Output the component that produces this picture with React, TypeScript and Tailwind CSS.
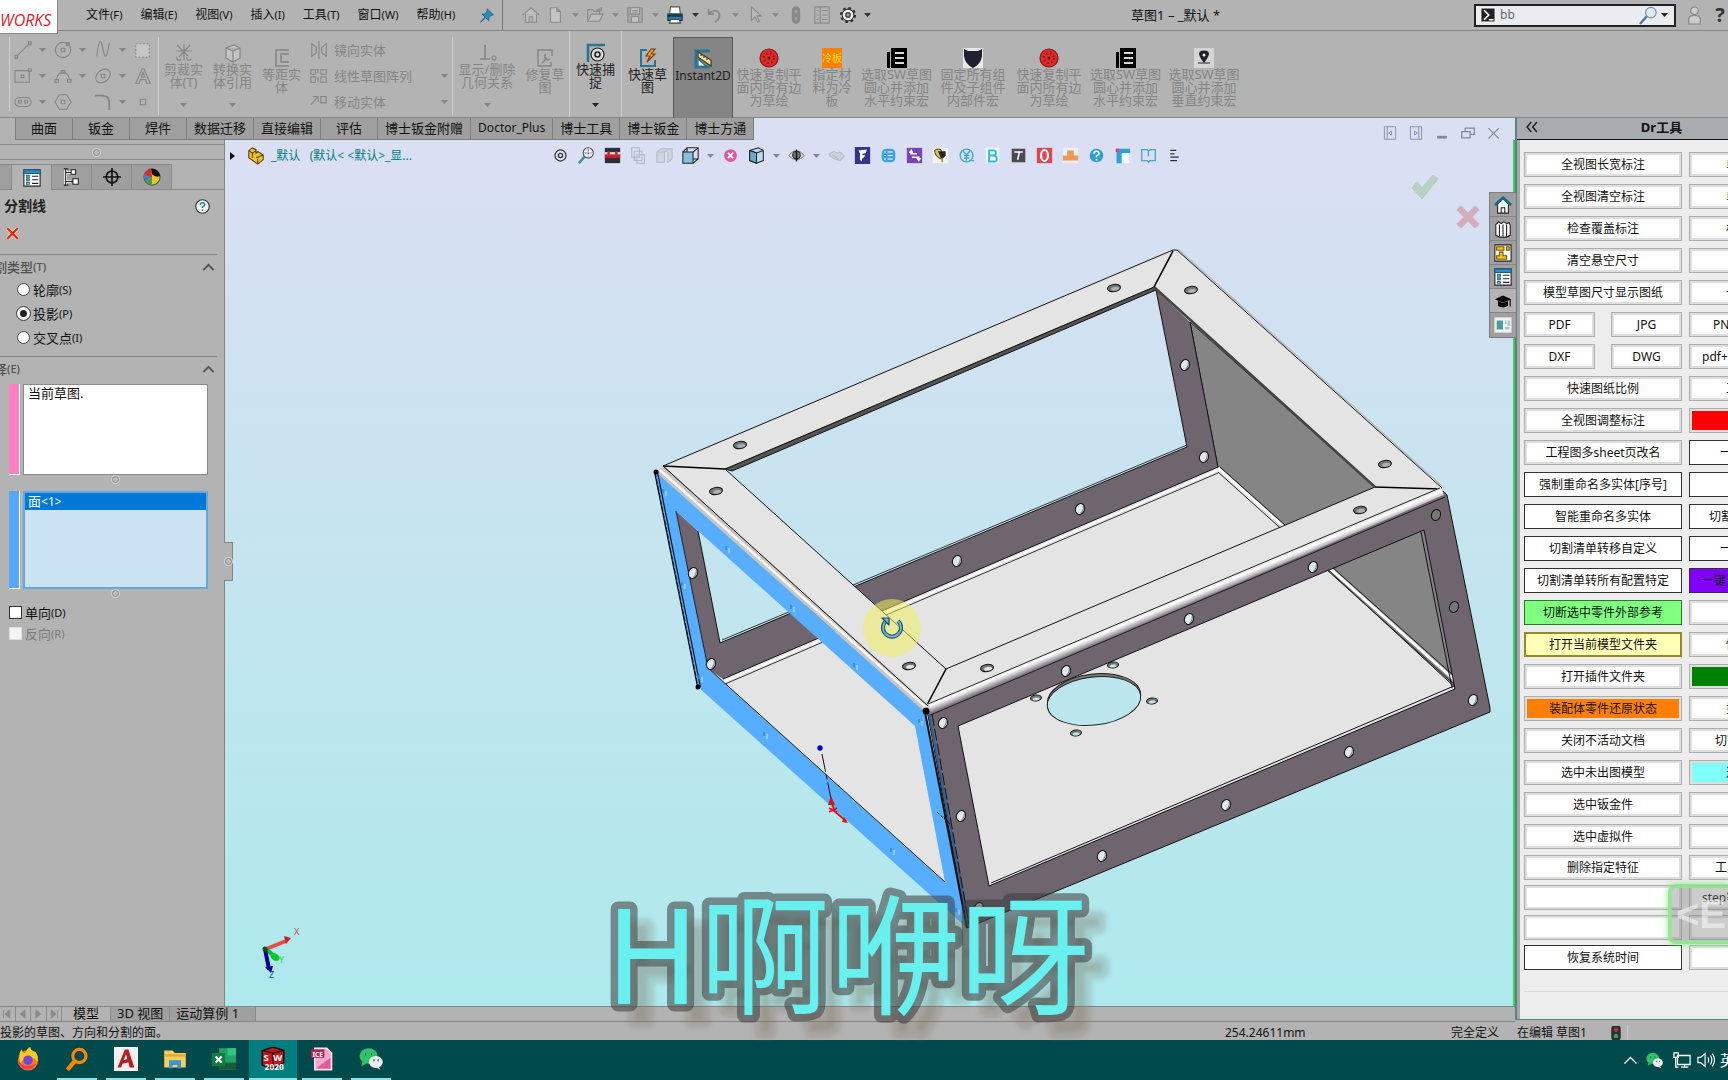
import type { ReactNode } from "react"
import clsx from "clsx"

type SvgProps = { size?: number; className?: string; children: ReactNode }

// every small drawing shares a 20 x 20 grid
function Svg({ size = 20, className, children }: SvgProps) {
  return (
    <svg width={size} height={size} viewBox="0 0 20 20" fill="none" stroke="currentColor" strokeWidth="1.2" className={clsx("shrink-0", className)} aria-hidden="true">
      {children}
    </svg>
  )
}

function Caret({ className = "w-4 text-[#808080]" }: { className?: string }) {
  return (
    <span className={clsx("flex shrink-0 justify-center", className)}>
      <svg width="7" height="4" viewBox="0 0 7 4" fill="currentColor" aria-hidden="true"><path d="M0 0h7L3.5 4z" /></svg>
    </span>
  )
}

/* ---------- title bar ---------- */

const menus = [
  ["文件", "(F)"], ["编辑", "(E)"], ["视图", "(V)"], ["插入", "(I)"], ["工具", "(T)"], ["窗口", "(W)"], ["帮助", "(H)"],
]

const quick = [
  { name: "新建", icon: <path d="M5 2h7l4 4v12H5zM12 2v4h4" fill="#c4c4c4" /> },
  { name: "打开", icon: <><path d="M2 17V4h5l2 2h6v3" /><path d="M2 17 6 9h13l-4 8z" fill="#bdbdbd" /><path d="M11 7c1-4 4-4 6-3M17 1v4h-4" /></> },
  { name: "保存", icon: <><path d="M2 2h16v16H2z" fill="#a8a8a8" /><path d="M5 2h10v7H5zM6 12h8v6H6zM7 5h6M7 7h6" fill="#c4c4c4" /></> },
  { name: "打印", on: true, icon: <><path d="M5 1h10l1 8H4z" fill="#fff" stroke="#555" /><path d="M2 9h16v7H2z" fill="#247fa5" stroke="#16384a" /><path d="M2 10h16v2H2z" fill="#16384a" stroke="none" /><path d="M5 15h10l1 4H4z" fill="#fff" stroke="#444" /></> },
  { name: "撤销", icon: <path d="M3 3v6h6M3 9c5-6 12-4 12 2 0 4-3 5-5 7" strokeWidth="2" /> },
  { name: "选择", icon: <path d="M6 1v15l4-4 3 6 2-1-3-6h5z" fill="#b8b8b8" /> },
]

function TitleBar() {
  return (
    <header className="flex h-[31px] shrink-0 items-center border-b border-[#858585] bg-[#b3b3b3]">
      <div className="relative z-10 -mb-1 h-[34px] w-[58px] shrink-0 self-start overflow-hidden border-r border-b border-[#8a8a8a] bg-white pt-2 font-['Open_Sans',sans-serif] text-[16px] leading-6 text-[#d8232a] italic">
        WORKS
      </div>
      <nav className="ml-5 flex gap-[2px]">
        {menus.map(([label, key]) => (
          <button key={label} className="flex items-baseline px-2 text-[12px] leading-5 whitespace-nowrap">
            {label}<span className="text-[11px]">{key}</span>
          </button>
        ))}
      </nav>
      <button aria-label="固定" className="ml-4">
        <Svg size={15}><path d="m11 1 8 8-3 1-3 3v4l-4-4-7 6 6-7-4-4h4l3-4z" fill="#2e8bb8" stroke="#1c6488" /></Svg>
      </button>
      <div className="ml-2 h-full w-px bg-[#777]" />
      <div className="ml-4 flex items-center text-[#8a8a8a]">
        <button aria-label="主页" className="flex w-6 justify-center">
          <Svg size={18}><path d="M1 10 10 2l9 8M4 9v9h12V9M8 18v-6h4v6" fill="#c0c0c0" /></Svg>
        </button>
        {quick.map((q) => (
          <span key={q.name} className="flex items-center">
            <button aria-label={q.name} className="flex w-6 justify-center"><Svg size={18}>{q.icon}</Svg></button>
            <Caret className={q.on ? "w-4 text-[#333]" : "w-4 text-[#8a8a8a]"} />
          </span>
        ))}
        <button aria-label="重建" className="flex w-[26px] justify-center">
          <Svg size={18}><rect x="6" y="1" width="8" height="18" rx="4" fill="#888" /><circle cx="10" cy="6" r="2" fill="#aaa" /><circle cx="10" cy="14" r="2" fill="#aaa" /></Svg>
        </button>
        <button aria-label="属性" className="flex w-[26px] justify-center">
          <Svg size={18}><path d="M2 1h16v18H2zM8 1v18M4 5h2M4 10h2M4 15h2M10 5h6M10 10h6M10 15h6" /></Svg>
        </button>
        <button aria-label="选项" className="flex w-[26px] justify-center">
          <Svg size={18}>
            <circle cx="10" cy="10" r="7.5" stroke="#333" strokeWidth="3" strokeDasharray="3 2.9" />
            <circle cx="10" cy="10" r="6.5" fill="#f4f4f4" stroke="#333" /><circle cx="10" cy="10" r="2.6" fill="#999" stroke="#333" />
          </Svg>
        </button>
        <Caret className="w-3 text-[#333]" />
      </div>
      <h1 className="mx-auto pl-1 text-[13px] leading-5 whitespace-nowrap">草图1 – _默认 *</h1>
      <label className="flex h-[23px] w-[202px] shrink-0 items-center border-2 border-[#222] bg-[#ebecef] px-1">
        <Svg size={16}><path d="M1 1h18v18H1z" fill="#222" stroke="#fff" strokeWidth="1.5" /><path d="m5 4 6 6-6 6M11 16h6" stroke="#fff" strokeWidth="2" /></Svg>
        <input aria-label="搜索" defaultValue="bb" className="ml-1 w-0 flex-1 bg-transparent text-[12px] text-[#666] outline-none" />
        <Svg size={19}><circle cx="12.500" cy="7" r="5.500" fill="#dfeaf5" stroke="#6e93b4" /><path d="m8 11-7 8" stroke="#4b7ba4" strokeWidth="2.600" /></Svg>
        <Caret className="w-3 text-[#222]" />
      </label>
      <button aria-label="用户" className="ml-2 flex w-5 justify-center">
        <Svg size={19} className="text-[#858585]"><circle cx="10" cy="5" r="4" fill="#ccc" /><path d="M4 19v-5q0-4 6-4t6 4v5z" fill="#ccc" /></Svg>
      </button>
      <button aria-label="帮助" className="ml-2 w-4 shrink-0 text-[20px] leading-5 font-bold text-[#333]">?</button>
    </header>
  )
}

/* ---------- command ribbon ---------- */

const sketchTools: { name: string; caret?: boolean; icon: ReactNode }[] = [
  { name: "直线", caret: true, icon: <><path d="m3 17 14-14" /><path d="M1 16h3v3H1zM16 1h3v3h-3z" /></> },
  { name: "圆", caret: true, icon: <><circle cx="10" cy="10" r="8.500" /><path d="M8 8h4v4H8zM14 2h3v3h-3z" /></> },
  { name: "样条曲线", caret: true, icon: <path d="M3 17C6-6 8-1 10 9s4 13 7-7" /> },
  { name: "面", icon: <path d="M2 3h15v15H2z" strokeDasharray="2 2" fill="#c6c6c6" /> },
  { name: "矩形", caret: true, icon: <><path d="M1 4h16v13H1z" /><path d="M8 9h3v3H8zM16 2h3v3h-3z" /></> },
  { name: "圆弧", caret: true, icon: <><path d="M3 14C3 3 17 3 17 14" /><path d="M1 14h4v3H1zM15 14h4v3h-4zM8 4h4v3H8z" /></> },
  { name: "椭圆", caret: true, icon: <><ellipse cx="10" cy="10" rx="9" ry="6.500" transform="rotate(-40 10 10)" /><path d="M8 8h4v4H8z" /></> },
  { name: "文字", icon: <path d="M2 18 9 2h2l7 16h-4l-1-4H7l-1 4zM8 11h4l-2-5z" /> },
  { name: "槽口", caret: true, icon: <><rect x="1" y="5" width="18" height="10" rx="5" /><path d="M5 8h3v3H5zM12 8h3v3h-3z" /></> },
  { name: "多边形", icon: <><path d="m6 2h8l5 8-5 8H6l-5-8z" /><path d="M8 8h4v4H8z" /></> },
  { name: "圆角", caret: true, icon: <path d="M1 3h8q8 0 8 8v8M1 3h10" strokeWidth="2" /> },
  { name: "点", icon: <path d="M7 7h6v6H7z" /> },
]

const editTools = [
  { lines: ["剪裁实", "体(T)"], caret: true, icon: <path d="m3 2 11 11M16 2 5 14M10 1v16M2 8h16M3 14a2 2 0 1 0 4 2M13 14a2 2 0 1 0 4 2" /> },
  { lines: ["转换实", "体引用"], caret: true, icon: <path d="M3 5 11 2l6 3v10l-7 4-7-4zM3 5l7 3 7-3M10 8v11" fill="#c5c5c5" /> },
  { lines: ["等距实", "体"], icon: <path d="M17 2H4v16h13M17 6H9v8h8" strokeWidth="1.600" /> },
]

const listTools = [
  { label: "镜向实体", icon: <path d="M2 3v14l5-4V7zM18 3v14l-5-4V7zM10 0v20" /> },
  { label: "线性草图阵列", caret: true, icon: <path d="M1 3h5v5H1zM7 3h2v4M1 11h5v6H1zM12 3h6v5h-6zM12 11h6v6h-6zM9 11v6" /> },
  { label: "移动实体", caret: true, icon: <path d="M1 13 8 5M3 4h6v6M12 4h6v7h-6z" /> },
]

const redDisc = (
  <>
    <circle cx="10" cy="10" r="9" fill="#dc2a2a" stroke="#8b1414" />
    <circle cx="10" cy="10" r="5" stroke="#8b1414" strokeDasharray="1.500 2.500" strokeWidth="2" />
    <circle cx="10" cy="10" r="1.500" fill="#5e0a0a" stroke="none" />
  </>
)
const blackList = (
  <>
    <path d="M4 0h16v20H4zM0 4h3v16H0z" fill="#000" stroke="none" />
    <path d="M8 5h9M8 10h9M8 15h9" stroke="#d8d8d8" strokeWidth="2" />
  </>
)

const macros: { lines: string[]; width: string; icon: ReactNode }[] = [
  { lines: ["快速复制平", "面内所有边", "为草绘"], width: "w-[72px]", icon: redDisc },
  { lines: ["指定材", "料为冷", "板"], width: "w-[54px]", icon: <><path d="M0 0h20v20H0z" fill="#ff8000" stroke="none" /><text x="10" y="14" textAnchor="middle" fontSize="10" fill="#ffe23a" stroke="none">冷板</text></> },
  { lines: ["选取SW草图", "圆心并添加", "水平约束宏"], width: "w-[75px]", icon: blackList },
  { lines: ["固定所有组", "件及子组件", "内部件宏"], width: "w-[78px]", icon: <><path d="M0 0h20v20H0z" fill="#e9e9e9" stroke="none" /><path d="M1 1 5 3h10l4-2v7q-1 8-9 12Q2 16 1 8z" fill="#20212c" stroke="none" /></> },
  { lines: ["快速复制平", "面内所有边", "为草绘"], width: "w-[74px]", icon: redDisc },
  { lines: ["选取SW草图", "圆心并添加", "水平约束宏"], width: "w-[79px]", icon: blackList },
  { lines: ["选取SW草图", "圆心并添加", "垂直约束宏"], width: "w-[78px]", icon: <><path d="M0 0h20v20H0z" fill="#d4d4d4" stroke="none" /><path d="M10 14C2 4 7 3 10 3s8 1 0 11zM4 15h12" fill="#20212c" stroke="#20212c" /><circle cx="10" cy="7" r="1.500" fill="#fff" stroke="none" /></> },
]

type BigProps = { lines: string[]; icon: ReactNode; caret?: boolean; className?: string }

function BigButton({ lines, icon, caret, className }: BigProps) {
  return (
    <button className={clsx("flex h-full shrink-0 flex-col items-center text-[13px] leading-[13px] whitespace-nowrap", caret ? "pt-3" : "pt-[17px]", className)}>
      <Svg size={20}>{icon}</Svg>
      {lines.map((l, i) => <span key={i}>{l}</span>)}
      {caret && <Caret className="mt-[14px]" />}
    </button>
  )
}

function Ribbon() {
  return (
    <div className="flex h-[87px] shrink-0 border-b border-[#858585] bg-[#b3b3b3] text-[#858585]">
      <div className="my-[6px] w-[10px] shrink-0 border-r border-[#cfcfcf]" />
      <div className="mt-[6px] mb-[2px] grid w-[149px] shrink-0 grid-cols-[40px_40px_40px_26px] border-r border-[#cfcfcf] pl-1">
        {sketchTools.map((t) => (
          <button key={t.name} aria-label={t.name} className="flex items-center">
            <Svg size={18}>{t.icon}</Svg>
            {t.caret && <Caret className="w-5" />}
          </button>
        ))}
      </div>
      <div className="mt-[6px] mb-[2px] flex w-[294px] shrink-0 border-r border-[#cfcfcf]">
        <div className="-mt-[6px] flex">
          {editTools.map((t) => <BigButton key={t.lines[0]} {...t} className="w-[49px]" />)}
        </div>
        <div className="flex flex-1 flex-col">
          {listTools.map((t) => (
            <button key={t.label} className="flex flex-1 items-center pl-1 text-[13px] leading-5 whitespace-nowrap">
              <Svg size={18} className="mr-[6px]">{t.icon}</Svg>
              {t.label}
              {t.caret && <Caret className="mr-1 ml-auto" />}
            </button>
          ))}
        </div>
      </div>
      <div className="flex w-[117px] shrink-0 border-r border-[#cfcfcf]">
        <BigButton caret lines={["显示/删除", "几何关系"]} className="w-[68px]" icon={<><path d="M8 2v14M3 16h10" strokeWidth="1.600" /><circle cx="17" cy="15" r="2" /></>} />
        <BigButton lines={["修复草", "图"]} className="w-[48px]" icon={<path d="M17 8V2H3v16h13v-4M7 15l5-5M11 6a3 3 0 1 0 4 5" strokeWidth="1.400" />} />
      </div>
      <div className="flex text-[#222]">
        <BigButton caret lines={["快速捕", "捉"]} className="w-[52px] border-r border-[#cfcfcf]" icon={<><path d="M2 19V2h17" stroke="#2b7494" strokeWidth="2.600" /><circle cx="11.500" cy="11.500" r="6.500" fill="#ddd" stroke="#222" /><circle cx="11.500" cy="11.500" r="2.500" stroke="#222" strokeWidth="1.600" /></>} />
        <BigButton lines={["快速草", "图"]} className="w-[51px]" icon={<><path d="M9 2H3v16h14v-6" stroke="#2b7494" strokeWidth="2" /><path d="m13 1-5 7h4l-3 6 8-8h-4l4-5z" fill="#ffab1f" stroke="#7c3d12" /></>} />
        <BigButton lines={["Instant2D"]} className="mt-[6px] mb-[2px] h-auto w-[60px] border border-[#5a5a5a] bg-[#858585] pt-[11px]! text-[12px]!" icon={<><path d="M17 2H3v16h14" stroke="#2b7494" strokeWidth="3" /><path d="m5 10 8 7H5z" fill="#fff" stroke="#2b7494" /><path d="m5 3 13 8v6L5 8z" fill="#ffe27a" stroke="#3a3a3a" /><path d="M8 5v2M11 7v2M14 9v2" stroke="#3a3a3a" /></>} />
      </div>
      <div className="flex">
        {macros.map((m, i) => (
          <BigButton key={i} lines={m.lines} icon={m.icon} className={m.width} />
        ))}
      </div>
    </div>
  )
}

/* ---------- left property manager ---------- */

const listIcon = (
  <>
    <path d="M1 1h18v18H1z" fill="#fff" stroke="#222" /><path d="M1 1h18v4H1z" fill="#2f8bbd" stroke="#1d5d82" />
    <path d="M4 7h3v2H4zM4 11h3v2H4zM4 15h3v2H4z" stroke="#1d5d82" /><path d="M10 8h7M10 12h7M10 16h7" stroke="#222" />
  </>
)

const managerTabs = [
  { name: "属性", on: true, icon: listIcon },
  { name: "配置", icon: <><path d="M3 1v18M3 5h6M3 15h6" stroke="#fff" strokeWidth="3" /><path d="M3 1v18M3 5h6M3 15h8M1 1h5M1 19h5" stroke="#222" /><path d="M9 2h5v5H9zM11 12h6v6h-6z" fill="#fff" stroke="#222" /></> },
  { name: "尺寸", icon: <><circle cx="10" cy="10" r="6.500" stroke="#111" strokeWidth="1.800" /><path d="M10 0v20M0 10h20" stroke="#111" strokeWidth="1.800" /></> },
  { name: "外观", icon: <><circle cx="10" cy="10" r="9" fill="#e9c52c" stroke="#555" /><path d="M10 10 1 9a9 9 0 0 1 1-3q4 4 8 4z" fill="#3b7cd8" stroke="none" /><path d="M10 10 9 1a9 9 0 0 0-7 5q3 4 8 4z" fill="#da2b2b" stroke="none" /><path d="M10 7 9 1a9 9 0 0 1 10 8q-5 2-9-2z" fill="#111" stroke="none" /><path d="M10 10v9a9 9 0 0 1-7-4z" fill="#4d9a46" stroke="none" /><path d="M10 10 1 9q0 3 2 6z" fill="#3b7cd8" stroke="none" /></> },
]

function Grip() {
  return <span className="mx-auto block size-[7px] rounded-full border border-[#8a8a8a] bg-[#bbb] ring-1 ring-[#cfcfcf]" />
}

function SectionHead({ label, hot }: { label: string; hot: string }) {
  return (
    <button className="flex h-6 w-[217px] items-center border-t border-[#858585] pt-px pr-[2px] text-[13px] leading-5 font-medium text-[#505050]">
      <span className="-ml-[6px]">{label}</span><span className="text-[11px]">{hot}</span>
      <Svg size={13} className="ml-auto text-[#555]"><path d="m2 14 8-8 8 8" strokeWidth="3" /></Svg>
    </button>
  )
}

const splitTypes = [["轮廓", "(S)"], ["投影", "(P)"], ["交叉点", "(I)"]]

function PropertyPanel() {
  return (
    <aside className="relative z-10 w-[225px] shrink-0 border-r border-[#858585] bg-[#b3b3b3]">
      <div className="mt-1 flex h-[16px] items-center border-y border-[#8a8a8a]"><span className="w-[192px]"><Grip /></span></div>
      <div className="mt-1 flex h-[26px] border-b border-[#8a8a8a]">
        <span className="w-3 border-t border-r border-[#8a8a8a] bg-[#9f9f9f]" />
        {managerTabs.map((t) => (
          <button key={t.name} aria-label={t.name} className={clsx("flex w-10 items-center justify-center border-t border-r border-[#8a8a8a]", t.on ? "-mb-px bg-[#b3b3b3]" : "bg-[#9f9f9f]")}>
            <Svg size={18}>{t.icon}</Svg>
          </button>
        ))}
      </div>
      <div className="flex h-8 items-center justify-between pr-[14px] pl-1">
        <h2 className="text-[14px] leading-5 font-bold text-[#222]">分割线</h2>
        <button aria-label="帮助">
          <Svg size={15}><circle cx="10" cy="10" r="9" fill="#f5f5f5" stroke="#333" strokeWidth="1.500" /><path d="M7 8q0-3 3-3t3 2.500q0 1.500-3 3v1.500M10 14v2" stroke="#2b7dab" strokeWidth="2.200" /></Svg>
        </button>
      </div>
      <button aria-label="取消" className="mt-[5px] mb-[14px] ml-[6px] block">
        <Svg size={13}><path d="m2 2 16 16M18 2 2 18" stroke="#f0d8d0" strokeWidth="6" /><path d="m2 2 16 16M18 2 2 18" stroke="#d62c0b" strokeWidth="3.500" /></Svg>
      </button>

      <SectionHead label="割类型" hot="(T)" />
      <div className="mb-[6px] pl-[17px]">
        {splitTypes.map(([label, hot]) => (
          <label key={label} className="flex h-6 items-center pb-px text-[13px] leading-5">
            <input type="radio" name="split" defaultChecked={label === "投影"} className="mr-[3px] size-[13px] appearance-none rounded-full border border-[#444] bg-white checked:border-[3px] checked:border-white checked:bg-[#222] checked:outline checked:outline-[#444]" />
            {label}<span className="text-[11px]">{hot}</span>
          </label>
        ))}
      </div>

      <SectionHead label="择" hot="(E)" />
      <div className="mt-1 flex h-[91px] gap-[3px] pl-[9px]">
        <span className="w-[11px] border-r border-b border-white bg-[#ff80c0]" />
        <ul aria-label="投影的草图" className="w-[185px] border border-[#8a8a8a] bg-white px-1 text-[13px] leading-4">
          <li>当前草图.</li>
        </ul>
      </div>
      <div className="flex h-4 items-start pt-px pl-5"><span className="w-[190px]"><Grip /></span></div>
      <div className="flex h-[98px] gap-[3px] pl-[9px]">
        <span className="w-[11px] border-r border-b border-white bg-[#57a8ff]" />
        <ul aria-label="要分割的面" className="w-[185px] border-2 border-[#5fa9dc] bg-[#cbe2f3] text-[13px] leading-4">
          <li className="bg-[#0078d7] px-[3px] text-white">面<span className="text-[12px]">&lt;1&gt;</span></li>
        </ul>
      </div>
      <div className="flex h-[9px] items-center pl-5"><span className="w-[190px]"><Grip /></span></div>
      <div className="mt-1 pl-[9px]">
        <label className="flex h-[21px] items-center text-[13px] leading-5">
          <input type="checkbox" className="mr-[3px] size-[13px] appearance-none border border-[#333] bg-white" />
          单向<span className="text-[11px]">(D)</span>
        </label>
        <label className="flex h-[21px] items-center text-[13px] leading-5 text-[#7a7a7a]">
          <input type="checkbox" disabled className="mr-[3px] size-[13px] appearance-none border border-[#ddd] bg-[#f4f4f4]" />
          反向<span className="text-[11px]">(R)</span>
        </label>
      </div>
      <button aria-label="收起" className="absolute top-[402px] -right-[9px] flex h-[39px] w-[9px] items-center border border-l-0 border-[#858585] bg-[#b3b3b3]"><Grip /></button>
    </aside>
  )
}

/* ---------- graphics area ---------- */

const railHoles = [[1114, 288], [1191, 290], [1385, 464], [1360, 510], [740, 445], [716, 491], [909, 666], [987, 668]]
const plateHoles = [[1113, 665], [1036, 698], [1152, 701], [1076, 733]]
const flangeHoles = [
  [1185, 365], [1204, 457], [1080, 509], [957, 561], [693, 573], [711, 664], [1313, 567], [1189, 619], [1066, 671],
  [943, 723], [961, 816], [979, 908], [1102, 856], [1226, 805], [1349, 752], [1473, 700], [1454, 607], [1436, 515],
]
const blueHoles = [[665, 492], [728, 549], [793, 608], [856, 666], [684, 585], [701, 678], [766, 735], [893, 851], [921, 722], [958, 911]]

function Model() {
  return (
    <svg className="absolute inset-0 size-full" viewBox="225 140 1288 866" preserveAspectRatio="xMidYMid slice" strokeLinejoin="round" aria-hidden="true">
      <defs>
        <linearGradient id="bend" gradientUnits="userSpaceOnUse" x1="1180" y1="597" x2="1184.6" y2="608">
          <stop offset="0" stopColor="#e4e4e4" /><stop offset=".3" stopColor="#fff" /><stop offset=".45" stopColor="#e4e4e4" /><stop offset="1" stopColor="#6f656f" />
        </linearGradient>
      </defs>
      {/* floor seen through the openings */}
      <path d="M720 681 818 638 886 609 1218 468 1460 684 1460 692 985 892 945 882 708 668z" fill="#e4e4e4" />
      {/* right wall */}
      <path d="M1190 322 1375 487 1430 510 1460 692 1218 468z" fill="#858585" stroke="#222" />
      {/* bend strip between floor and right wall */}
      <path d="M1218 468 1460 685" stroke="#fff" strokeWidth="3" />
      <path d="M1218 472 1456 686M1220 467 1462 683" stroke="#222" fill="none" />
      {/* back flange */}
      <path d="M676 511 698 531 720 643 1187 447 1156 290 1190 322 1218 467 723 679 707 668z" fill="#6f656f" />
      <path d="M1156 290 1187 447 720 643 698 531M1190 322 1218 467 723 679" fill="none" stroke="#111" />
      <path d="M723 682 1218 470" stroke="#fff" strokeWidth="2" />
      <path d="M725 684 1218 473M722 640 1187 445" stroke="#333" fill="none" />
      {/* hole cut in the floor */}
      <ellipse cx="1094" cy="699" rx="47" ry="25" transform="rotate(-7 1094 699)" fill="#777" stroke="#222" />
      <ellipse cx="1094" cy="701" rx="47" ry="24" transform="rotate(-7 1094 701)" fill="#bce6ed" stroke="#222" />
      {/* front flange */}
      <path d="M927 710 1443 491 1447 495 1490 708 1490 712 967 928zM958 726 989 886 1455 689 1424 530z" fillRule="evenodd" fill="#6f656f" stroke="#111" />
      <path d="M991 883 1454 686M1421 532 1452 688" stroke="#111" fill="none" />
      {/* top frame */}
      <path d="M725 469 1154 287 1156 290 732 471z" fill="#555" stroke="#111" />
      <path d="M663 466 1173 250 1177 250 1442 488 927 707zM725 469 946 669 1375 487 1154 287z" fillRule="evenodd" fill="#e4e4e4" stroke="#111" />
      <path d="M1154 287 1375 487" stroke="#444" strokeWidth="2.500" />
      <path d="M1178 249 1444 488" stroke="#bbb" strokeWidth="1.500" />
      <path d="M1173 251 1154 287M663 466 725 469M927 705 946 669M1375 487 1440 489" stroke="#000" strokeWidth="1.600" />
      <path d="M928 703 1441 487 1444 495 928 716z" fill="url(#bend)" />
      <path d="M928 704 1440 488M928 716 1445 497" stroke="#222" fill="none" />
      {/* rounded edge above the selected face */}
      <path d="M663 466 656 472 926 713 930 706z" fill="#c9c6c2" />
      <path d="m660 470 268 239" stroke="#f6f6f6" strokeWidth="2.500" />
      <path d="m663 466 265 240" stroke="#111" />
      {/* selected face */}
      <path d="M656 472 926 713 967 928 698 687zM676 511 708 668 945 882 915 726z" fillRule="evenodd" fill="#57aeff" />
      <path d="m656 472 43 215" stroke="#111" strokeWidth="4" />
      <path d="m656 472 43 215" stroke="#57aeff" strokeWidth="1.600" />
      <path d="m655 472 43 215" stroke="#111" strokeDasharray="5 2" />
      <path d="m676 511 32 157 237 214" fill="none" stroke="#222" />
      <path d="m925 712 42 216" stroke="#111" strokeWidth="2" />
      <path d="m929 714 40 212" stroke="#2b5f99" strokeWidth="2" />
      <path d="m932 714 37 210" stroke="#111" strokeDasharray="12 3" />
      <path d="m937 812 15 14M944 816l4 12" stroke="#111" strokeDasharray="3 2" />
      <circle cx="656" cy="472" r="2.500" /><circle cx="926" cy="711" r="3.500" /><circle cx="698" cy="687" r="2.500" />
      {railHoles.map(([x, y]) => (
        <g key={x} transform={`rotate(-8 ${x} ${y})`}>
          <ellipse cx={x} cy={y} rx="6.500" ry="3.600" fill="#777" stroke="#111" />
          <ellipse cx={x + 1} cy={y + 1} rx="4" ry="1.800" fill={y > 600 ? "#e4e4e4" : "#a9b1b8"} />
        </g>
      ))}
      {plateHoles.map(([x, y]) => (
        <g key={x} transform={`rotate(-8 ${x} ${y})`}>
          <ellipse cx={x} cy={y} rx="5.500" ry="3" fill="#777" stroke="#111" />
          <ellipse cx={x} cy={y + 1} rx="3.500" ry="1.500" fill="#bce6ed" />
        </g>
      ))}
      {flangeHoles.map(([x, y]) => (
        <g key={`${x}-${y}`} transform={`rotate(20 ${x} ${y})`}>
          <ellipse cx={x} cy={y} rx="4.500" ry="5.500" fill={x > 1430 && y < 650 ? "#777" : "#dfe9ee"} stroke="#111" />
          <path d={`M${x + 2} ${y - 4}q2 4 0 8`} stroke="#777" fill="none" />
        </g>
      ))}
      {blueHoles.map(([x, y]) => (
        <g key={x}>
          <path d={`M${x - 2} ${y - 3}v4`} stroke="#3585cf" strokeWidth="1.500" />
          <path d={`M${x + 1} ${y - 1}v5`} stroke="#a5d3ff" strokeWidth="1.500" />
        </g>
      ))}
      {/* origin */}
      <circle cx="820" cy="748" r="2.700" fill="#0000d8" />
      <path d="m822 754 10 50" stroke="#111" strokeDasharray="18 3 5 3" />
      <path d="m831 798 3 12M833 810l13 11M829 808l8 4M829 812l8-4" stroke="#e01010" strokeWidth="1.800" />
      <path d="m828 805 3-9 4 9zM842 822l2-5 4 6z" fill="#e01010" />
      {/* rotate cursor */}
      <circle cx="892" cy="628" r="29" fill="#f0ee60" opacity=".55" />
      <path d="M886 621a9 9 0 1 0 12 0" fill="none" stroke="#174f68" strokeWidth="4" />
      <path d="M886 621a9 9 0 1 0 12 0" fill="none" stroke="#6fb9d3" strokeWidth="2" />
      <path d="M882 618h7v7z" fill="#6fb9d3" stroke="#174f68" strokeWidth="1.200" />
      {/* view triad */}
      <path d="m266 949 20-8" stroke="#e84c4c" strokeWidth="4" /><path d="m284 936 7 2-5 6z" fill="#c22" />
      <path d="m266 949 8 7" stroke="#0b3" strokeWidth="4" /><ellipse cx="275" cy="957" rx="5" ry="3.500" fill="#0bc822" transform="rotate(35 275 957)" />
      <path d="m265 949 4 20" stroke="#000090" strokeWidth="4" /><path d="m265 967 8-1-2 7z" fill="#000090" />
      <circle cx="265" cy="949" r="2.500" fill="#075507" />
      <g fontSize="9">
        <text x="294" y="935" fill="#c0506a">X</text><text x="279" y="963" fill="#2ecf4a">Y</text><text x="269" y="978" fill="#2040c0">Z</text>
      </g>
      {/* confirm and cancel corner marks */}
      <path d="m1412 188 5-6 5 6 11-13 5 4-16 20z" fill="#b7d2c5" stroke="#b0ccbd" />
      <path d="m1461 210 14 14M1475 210l-14 14" stroke="#d3adbc" strokeWidth="6.500" strokeLinecap="square" />
    </svg>
  )
}

const hud: { name: string; caret?: boolean; icon: ReactNode }[] = [
  { name: "整屏显示", icon: <><circle cx="10" cy="10" r="6.500" stroke="#333" strokeWidth="1.500" /><circle cx="10" cy="10" r="2.500" stroke="#333" strokeWidth="1.500" /></> },
  { name: "局部放大", icon: <><path d="m8 11-7 8" stroke="#4b88ab" strokeWidth="3" /><circle cx="12" cy="7" r="6" fill="#eef2f8" stroke="#444" /><path d="M12 3v8M8 7h8" stroke="#444" strokeDasharray="2 1.500" /></> },
  { name: "剖面", icon: <><path d="M1 1h18v18H1z" fill="#2c2f36" stroke="none" /><path d="M1 6h18v3H1z" fill="#d9dff3" stroke="none" /><path d="M1 9h18v4H1z" fill="#d01c2a" stroke="none" /><path d="M4 5h3v4H4zM13 5h3v4h-3z" fill="#d01c2a" stroke="none" /></> },
  { name: "复制", icon: <path d="M2 1h9v11H2zM5 5h9v11H5zM8 9h9v10H8z" stroke="#b2b5c4" /> },
  { name: "视图", icon: <path d="M1 6h9v12H1zM1 6l5-4h13v12l-5 4V6M10 6l4-3" stroke="#b5b8c6" fill="#ced3e2" /> },
  { name: "视图定向", caret: true, icon: <><path d="M1 6h12v13H1z" fill="#85c0dc" stroke="#222" /><path d="M1 6 6 1h13v13l-6 5M13 6l6-5M6 1v5M13 14h6" fill="none" stroke="#222" /></> },
  { name: "删除", icon: <><circle cx="10" cy="10" r="7.500" fill="#d95b9b" stroke="none" /><path d="m7 7 6 6M13 7l-6 6" stroke="#fff" strokeWidth="2" /></> },
  { name: "显示样式", caret: true, icon: <><path d="M2 4 12 1l6 3v12l-8 3-8-3z" fill="#b9dcea" stroke="#222" /><path d="M2 4l8 3 8-3M10 7v12" stroke="#222" /><path d="M10 7v12l-8-3V4z" fill="#6aa9c8" stroke="#222" /></> },
  { name: "隐藏项目", caret: true, icon: <><path d="M1 10q9-11 18 0-9 10-18 0z" fill="#ddd" stroke="#888" /><circle cx="10" cy="9.500" r="4.500" fill="#777" stroke="#222" /><path d="M10 3v14" stroke="#111" strokeWidth="1.500" /></> },
  { name: "外观", icon: <path d="M1 9q5-6 9-2 5-3 9 4l-5 5q-9-2-13-7zM5 9l8 6" fill="#cdd2df" stroke="#b8bbc8" /> },
  { name: "F", icon: <><path d="M1 0h18v20H1z" fill="#35348c" stroke="none" /><path d="m5 4 10-1-1 4-4 1v2l3-1-1 3-2 1-1 4-2-2V7z" fill="#fff" stroke="none" /></> },
  { name: "列表", icon: <><rect x="2" y="2" width="16" height="16" rx="5" fill="#3ea4dc" stroke="none" /><path d="M5 6h2M5 10h2M5 14h2M9 6h6M9 10h6M9 14h6" stroke="#fff" /></> },
  { name: "交换", icon: <><path d="M1 1h18v18H1z" fill="#7a44b2" stroke="none" /><path d="M13 8H6V5M4 7l2-3 2 3M7 12h8v3M13 13l2 3 2-3" stroke="#fff" strokeWidth="1.800" /></> },
  { name: "工具", icon: <><path d="M1 1h18v18H1z" fill="#f2f3f4" stroke="none" /><path d="M3 4q5-3 8 0v10q-7-2-8-10z" fill="#e4c53b" stroke="#555" /><path d="M7 5h9v5q-2 3-5 4z" fill="#232323" stroke="none" /><path d="M12 13v5" stroke="#b8921b" strokeWidth="2" /></> },
  { name: "价格", icon: <><circle cx="10" cy="10" r="7.500" stroke="#3aa9da" strokeWidth="1.600" /><path d="m6 5 4 4 4-4M10 9v7M7 10h6M7 13h6M15 16h4" stroke="#3aa9da" strokeWidth="1.600" /></> },
  { name: "B", icon: <><path d="M2 1h16v18H2z" fill="#eef7fb" stroke="none" /><path d="M6 4h5q3 0 3 3t-3 3q4 0 4 4t-4 3H6zM6 10h5" stroke="#2dbcda" strokeWidth="2.200" /></> },
  { name: "T", icon: <><path d="M2 2h16v16H2z" fill="#4a4b52" stroke="none" /><path d="M5 6h10M11 6 9 15" stroke="#fff" strokeWidth="1.800" /></> },
  { name: "O", icon: <><path d="M1 1h18v18H1z" fill="#e04552" stroke="none" /><ellipse cx="10" cy="10" rx="4" ry="6.500" stroke="#fff" strokeWidth="2.500" /></> },
  { name: "台座", icon: <><path d="M1 1h18v18H1z" fill="#eaf0f5" stroke="none" /><path d="M6 4h8v6h5v6H1v-6h5z" fill="#ef985b" stroke="none" /></> },
  { name: "问题", icon: <><circle cx="10" cy="10" r="8" fill="#2f9fd4" stroke="none" /><path d="M7 8q0-3 3-3t3 2.500q0 1.500-3 3v1.500M10 14v2" stroke="#fff" strokeWidth="1.800" /></> },
  { name: "布局", icon: <><path d="M6 6h12v13H6z" fill="#f4f8fb" stroke="none" /><path d="M3 2h16v5H9v12H3z" fill="#2f9fd4" stroke="none" /><path d="M2 2h4v4H2z" fill="#c95068" stroke="none" /></> },
  { name: "书", icon: <path d="M2 3h6l2 2 2-2h6v13h-6l-2 2-2-2H2zM10 5v6" stroke="#45a6d2" strokeWidth="1.500" /> },
  { name: "菜单", icon: <path d="M5 4h7M5 8h5M5 12h10M5 16h8" stroke="#333" strokeWidth="1.400" /> },
]

const sideTabs = [
  { name: "主页", icon: <><path d="M4 9v10h12V9l-6-6z" fill="#fff" stroke="#222" /><path d="M1 10 10 2l9 8" stroke="#176a8a" strokeWidth="3" /><path d="M8 19v-6h4v6" stroke="#222" /></> },
  { name: "设计库", icon: <path d="M2 5l3-3 3 2 3-2 3 2 3-1 1 3v11l-4 2H9l-3 0-4-2zM6 5v13M10 5v13M14 5v13" fill="#fff" stroke="#222" /> },
  { name: "文件探索器", icon: <><path d="M1 1h18v18H1z" fill="#fff" stroke="#222" /><path d="M3 3h8v4H3zM14 3h3v4h-3zM6 9h4v4h4v4H3v-4h3z" fill="#f0c419" stroke="#6b5500" /></> },
  { name: "视图调色板", icon: listIcon },
  { name: "Dr工具", on: true, icon: <><path d="m1 8 9-4 9 4-9 4z" fill="#000" stroke="none" /><path d="M5 11v4q5 3 10 0v-4l-5 2zM18 8v8" fill="#000" stroke="#000" /></> },
  { name: "外观", icon: <><path d="M1 2h18v16H1z" fill="#f5f5f5" stroke="#ddd" /><path d="M3 5h7v10H3z" fill="#4d9d96" stroke="none" /><path d="M12 5h2v4h-2zM15 5h3v6h-3zM12 12h5v3h-5z" fill="#a5cbc6" stroke="none" /></> },
]

function Viewport() {
  return (
    <div className="relative flex-1 border-r-2 border-r-[#35d05e]">
      <Model />
      <div className="relative flex h-[31px] items-center">
        <div className="flex w-[322px] items-center pl-[5px] text-[12px] leading-5 whitespace-nowrap text-[#008080]">
          <svg width="5" height="8" viewBox="0 0 5 8" fill="#111" aria-hidden="true"><path d="M0 0l5 4-5 4z" /></svg>
          <Svg size={18} className="mr-[6px] ml-3"><path d="M2 4 6 1l4 2v4l2-2 6 4v5l-6 5L2 12z" fill="#f1c232" stroke="#5c4300" /><path d="M2 4l4 3v5M6 7l4-3M10 12l8-3M12 13v6" stroke="#5c4300" /></Svg>
          _默认&nbsp;&nbsp; (默认&lt; &lt;默认&gt;_显...
        </div>
        <div className="flex items-center">
          {hud.map((h) => (
            <span key={h.name} className="flex items-center">
              <button aria-label={h.name} className="flex w-[26px] justify-center"><Svg size={17}>{h.icon}</Svg></button>
              {h.caret && <Caret className="w-[14px] text-[#83879a]" />}
            </span>
          ))}
        </div>
      </div>
      <div className="absolute top-[52px] -right-[3px] w-[27px] border border-r-0 border-[#7d7d7d]">
        {sideTabs.map((t) => (
          <button key={t.name} aria-label={t.name} className={clsx("flex h-6 w-full items-center justify-center border-b border-[#858585] last:border-b-0", t.on ? "bg-[#b3b3b3]" : "bg-[#9f9f9f]")}>
            <Svg size={18}>{t.icon}</Svg>
          </button>
        ))}
      </div>
    </div>
  )
}

const ribbonTabs = ["曲面", "钣金", "焊件", "数据迁移", "直接编辑", "评估", "博士钣金附赠", "Doctor_Plus", "博士工具", "博士钣金", "博士方通"]

const windowButtons = [
  { name: "左窗格", icon: <path d="M2 1h16v18H2zM6 1v18M12 7v6l-4-3z" /> },
  { name: "右窗格", icon: <path d="M2 1h16v18H2zM14 1v18M8 7v6l4-3z" /> },
  { name: "最小化", icon: <path d="M3 16h14" strokeWidth="4" /> },
  { name: "还原", icon: <path d="M1 8h12v9H1zM6 8V3h13v9h-6" strokeWidth="1.800" /> },
  { name: "关闭", icon: <path d="m2 3 15 15M17 3 2 18" strokeWidth="1.800" /> },
]

function DocumentTabs() {
  return (
    <div className="flex h-[22px] shrink-0">
      <span className="w-[15px] bg-[#b3b3b3]" />
      <div className="flex border-l border-[#7d7d7d]">
        {ribbonTabs.map((t) => (
          <button
            key={t}
            className={clsx(
              "border-r border-b border-[#7d7d7d] bg-[#9f9f9f] pb-[2px] leading-[18px] whitespace-nowrap",
              t.length === 2 && "px-[15px] text-[13px]",
              t.length > 2 && t.length < 7 && "px-[7px] text-[13px]",
              t.length > 6 && "px-[7px] text-[12px]",
            )}
          >
            {t}
          </button>
        ))}
      </div>
      <div className="mr-2 ml-auto flex items-end text-[#8288a0]">
        {windowButtons.map((b) => (
          <button key={b.name} aria-label={b.name} className="flex w-[26px] justify-center"><Svg size={14}>{b.icon}</Svg></button>
        ))}
      </div>
    </div>
  )
}

const navPaths = ["M5 4v12M14 4v12L7 10z", "M13 4v12L6 10z", "M7 4v12l7-6z", "M15 4v12M6 4v12l7-6z"]

function BottomTabs() {
  return (
    <div className="flex h-4 shrink-0 border-y border-[#858585] bg-[#b3b3b3] text-[13px] leading-[10px]">
      <div className="flex w-[62px] text-[#8a8a8a]">
        {navPaths.map((d, i) => (
          <button key={i} aria-label={`翻页 ${i + 1}`} className="flex flex-1 justify-center border-r border-[#8a8a8a]"><Svg size={14}><path d={d} fill="currentColor" /></Svg></button>
        ))}
      </div>
      <button className="px-[11px] pb-[3px]">模型</button>
      <button className="border-x border-[#8a8a8a] bg-[#a0a0a0] px-[6px] pb-[3px]">3D 视图</button>
      <button className="border-r border-[#8a8a8a] bg-[#a0a0a0] pr-4 pb-[3px] pl-[6px]">运动算例 1</button>
    </div>
  )
}

/* ---------- right task pane ---------- */

type Tool = { label: string | string[]; look?: string; next?: string; nextLook?: string }

const GRAY = "border border-[#adadad] bg-white ring-2 ring-[#dedede] ring-inset"
const DARK = "border border-[#333] bg-white"

const PAD_L = "pl-[36px]"
const PAD_M = "pl-[30px]"
const PAD_S = "pl-[19px]"
const PAD_XS = "pl-[12px]"

const toolGroups: { gap: string; rows: Tool[] }[] = [
  {
    gap: "gap-[7px]",
    rows: [
      { label: "全视图长宽标注", next: "单", nextLook: clsx(GRAY, PAD_L) },
      { label: "全视图清空标注", next: "单", nextLook: clsx(GRAY, PAD_L) },
      { label: "检查覆盖标注", next: "标", nextLook: clsx(GRAY, PAD_L) },
      { label: "清空悬空尺寸" },
      { label: "模型草图尺寸显示图纸", next: "一", nextLook: clsx(GRAY, PAD_L) },
      { label: ["PDF", "JPG"], next: "PNG", nextLook: clsx(GRAY, "pl-[23px]") },
      { label: ["DXF", "DWG"], next: "pdf+", nextLook: clsx(GRAY, PAD_XS) },
      { label: "快速图纸比例", next: "工", nextLook: clsx(GRAY, PAD_L) },
      { label: "全视图调整标注", nextLook: "border border-[#adadad] bg-[#ff0000] ring-2 ring-[#dedede] ring-inset" },
      { label: "工程图多sheet页改名", next: "一", nextLook: clsx(DARK, PAD_M) },
      { label: "强制重命名多实体[序号]", look: DARK, nextLook: DARK },
      { label: "智能重命名多实体", look: DARK, next: "切割", nextLook: clsx(DARK, PAD_S) },
      { label: "切割清单转移自定义", look: DARK, next: "一", nextLook: clsx(DARK, PAD_M) },
      { label: "切割清单转所有配置特定", look: DARK, next: "一键", nextLook: clsx("border border-[#333] bg-[#8000ff]", PAD_XS) },
      { label: "切断选中零件外部参考", look: "border border-[#2b7a2b] bg-[#80ff80]" },
      { label: "打开当前模型文件夹", look: "border-2 border-[#8f8f1f] bg-[#ffffb8]", next: "快", nextLook: clsx(GRAY, PAD_L) },
      { label: "打开插件文件夹", nextLook: "border border-[#adadad] bg-[#008000] ring-2 ring-[#dedede] ring-inset" },
      { label: "装配体零件还原状态", look: "border border-[#adadad] bg-[#ff8000] ring-2 ring-[#dedede] ring-inset", next: "挂", nextLook: clsx(GRAY, PAD_L) },
      { label: "关闭不活动文档", next: "切割", nextLook: clsx(GRAY, "pl-[25px]") },
      { label: "选中未出图模型", next: "选", nextLook: "border border-[#adadad] bg-[#80ffff] ring-2 ring-[#dedede] ring-inset pl-[36px]" },
      { label: "选中钣金件" },
      { label: "选中虚拟件" },
    ],
  },
  {
    gap: "gap-[5px]",
    rows: [
      { label: "删除指定特征", next: "工具", nextLook: clsx(GRAY, "pl-[25px]") },
      { label: "", next: "step等", nextLook: clsx(GRAY, PAD_XS) },
      { label: "" },
      { label: "恢复系统时间", look: DARK },
    ],
  },
]

function ToolRow({ row }: { row: Tool }) {
  const cell = "h-[25px] overflow-hidden text-[12px] leading-[22px] whitespace-nowrap"
  const labels = Array.isArray(row.label) ? row.label : [row.label]
  return (
    <div className="flex gap-[7px]">
      <div className="flex w-[158px] shrink-0 justify-between">
        {labels.map((l) => (
          <button key={l} aria-label={l || "未命名"} className={clsx(cell, labels.length > 1 ? "w-[71px]" : "w-full", row.look ?? GRAY)}>{l}</button>
        ))}
      </div>
      <button aria-label={row.next ?? "未命名"} className={clsx(cell, "w-[158px] shrink-0 text-left", row.nextLook ?? GRAY)}>{row.next}</button>
    </div>
  )
}

function TaskPane() {
  return (
    <aside className="mb-[2px] w-[213px] shrink-0 overflow-hidden border-b border-l-2 border-[#5a8080] bg-[#ededed]">
      <div className="flex h-[22px] items-center border-b border-[#111] bg-[#a9acae] px-2 pb-[3px]">
        <button aria-label="折叠">
          <Svg size={14}><path d="m9 3-6 7 6 7M17 3l-6 7 6 7" stroke="#222" strokeWidth="2.200" /></Svg>
        </button>
        <h2 className="flex-1 pl-16 text-center text-[13px] leading-[18px] font-bold">Dr工具</h2>
      </div>
      <div className="flex h-full flex-col border-l-[3px] border-[#a6a6a6] pt-3 pl-1">
        <div className="flex flex-col gap-[6px]">
          {toolGroups.map((g) => (
            <div key={g.gap} className={clsx("flex flex-col", g.gap)}>
              {g.rows.map((r, i) => <ToolRow key={i} row={r} />)}
            </div>
          ))}
        </div>
        <div className="h-[22px] border-b border-[#d8d8d8]" />
      </div>
    </aside>
  )
}

/* ---------- status bar and taskbar ---------- */

function StatusBar() {
  return (
    <footer className="flex h-[18px] shrink-0 items-center bg-[#b3b3b3] pt-[3px] text-[12px] leading-[15px] whitespace-nowrap">
      <span className="flex-1">投影的草图、方向和分割的面。</span>
      <span className="w-[226px]">254.24611mm</span>
      <span className="w-[66px]">完全定义</span>
      <span className="w-[92px]">在编辑 草图1</span>
      <Svg size={14}><rect x="4" y="0" width="12" height="20" rx="3" fill="#333" stroke="#222" /><circle cx="10" cy="5.500" r="3" fill="#b33" stroke="none" /><circle cx="10" cy="14.500" r="3" fill="#3a7" stroke="none" /></Svg>
      <span className="ml-1 h-4 w-[101px] border-l border-[#ccc]" />
    </footer>
  )
}

const wechat = (
  <>
    <ellipse cx="8" cy="7.500" rx="7.500" ry="6.500" fill="#2fc26b" stroke="none" /><path d="m3 12-1 4 4-2z" fill="#2fc26b" stroke="none" />
    <ellipse cx="14" cy="12.500" rx="5.800" ry="5" fill="#eee" stroke="none" /><path d="m16 16 2 3-4-2z" fill="#eee" stroke="none" />
    <path d="M5 6h1M10 6h1M12 11h1M15.500 11h1" stroke="#245" strokeWidth="1.600" />
  </>
)

const apps: { name: string; open?: boolean; active?: boolean; icon: ReactNode }[] = [
  { name: "Firefox", icon: <><circle cx="10" cy="11" r="8.500" fill="#ff7a1a" stroke="none" /><path d="M3 5q1-3 2-3 0 3 3 3 1-4 4-5 0 3 4 4 3 3 2 8-7-8-15 2z" fill="#ffc928" stroke="none" /><circle cx="10" cy="11" r="4" fill="#7446d8" stroke="none" /><path d="M2 11q4 8 15 3-5 7-11 4-4-2-4-7z" fill="#f03c5e" stroke="none" /></> },
  { name: "Everything", open: true, icon: <><circle cx="12" cy="7.500" r="5.500" stroke="#ff8400" strokeWidth="2.600" /><path d="m8 12-6 7" stroke="#ff8400" strokeWidth="3.600" /></> },
  { name: "AutoCAD", open: true, icon: <><path d="M0 0h20v20H0z" fill="#f3f0f0" stroke="none" /><path d="M3 17 9 2h3l5 15h-4l-1-4-5 1-1 3zM8 11l3-1-1-4z" fill="#b32025" stroke="none" /></> },
  { name: "文件资源管理器", open: true, icon: <><path d="M1 3h7l2 2h9v12H1z" fill="#f7ce5b" stroke="none" /><path d="M1 6h18v2H1z" fill="#e5a92b" stroke="none" /><path d="M5 18v-7h10v7h-3v-3H8v3z" fill="#3a93d6" stroke="none" /></> },
  { name: "Excel", open: true, icon: <><path d="M6 1h14v18H6z" fill="#21a366" stroke="none" /><path d="M13 1h7v6h-7z" fill="#33c481" stroke="none" /><path d="M13 13h7v6H6v-6z" fill="#185c37" stroke="none" /><path d="M0 5h11v11H0z" fill="#107c41" stroke="none" /><path d="m3 8 5 5M8 8l-5 5" stroke="#fff" strokeWidth="1.800" /></> },
  { name: "SOLIDWORKS 2020", open: true, active: true, icon: <><path d="m1 3 9-3 9 3v10l-9 5-9-3z" fill="#c4161c" stroke="#111" /><path d="M1 3l9 2 9-2M10 5v13" stroke="#300" /><text x="2" y="12" fontSize="8" fontWeight="700" fill="#fff" stroke="none">S</text><text x="10" y="12" fontSize="8" fontWeight="700" fill="#fff" stroke="none">W</text><text x="3" y="19" fontSize="7" fontWeight="700" fill="#fff" stroke="none">2020</text></> },
  { name: "ICE", open: true, icon: <><path d="M4 1h10l4 4v14H4z" fill="#f6a9cf" stroke="#f9e7f0" /><path d="m5 18 12-9v9z" fill="#e05a9c" stroke="none" /><path d="M1 2h11v7H1z" fill="#b5204f" stroke="none" /><text x="2" y="8" fontSize="5.500" fontWeight="700" fill="#fff" stroke="none">ICE</text></> },
  { name: "微信", open: true, icon: wechat },
]

function Taskbar() {
  return (
    <div className="flex h-10 shrink-0 bg-[#004a4c]">
      <div className="flex gap-[9px] pl-2">
        {apps.map((a) => (
          <button
            key={a.name}
            aria-label={a.name}
            className={clsx("flex items-center justify-center border-b-2", a.active ? "-mx-1 w-12 bg-[#007d7f]" : "w-10", a.open ? "border-[#8fe3e6]" : "border-transparent")}
          >
            <Svg size={24}>{a.icon}</Svg>
          </button>
        ))}
      </div>
      <div className="ml-auto flex items-center gap-1 text-white">
        <button aria-label="显示隐藏的图标" className="flex w-5 justify-center"><Svg size={15}><path d="m2 14 8-8 8 8" strokeWidth="1.800" /></Svg></button>
        <button aria-label="微信" className="flex w-5 justify-center"><Svg size={17}>{wechat}</Svg></button>
        <button aria-label="网络" className="ml-1 flex w-5 justify-center"><Svg size={18}><path d="M5 5h14v10H5zM9 18h8M13 15v3M1 2h5v5H1zM3 7v11h3" strokeWidth="1.400" /></Svg></button>
        <button aria-label="音量" className="flex w-5 justify-center"><Svg size={18}><path d="M1 7h3l5-4v14l-5-4H1zM12 7q2 3 0 6M15 5q3 5 0 10M17 3q5 7 0 14" strokeWidth="1.300" /></Svg></button>
        <span className="w-2 overflow-hidden text-[15px] leading-5 whitespace-nowrap">英</span>
      </div>
    </div>
  )
}

export default function App() {
  return (
    <div className="relative flex h-screen flex-col overflow-hidden bg-[#b3b3b3] font-['Noto_Sans','Noto_Sans_CJK_SC',sans-serif] text-[#111]">
      <TitleBar />
      <Ribbon />
      <main className="flex min-h-0 flex-1">
        <div className="flex min-w-0 flex-1 flex-col">
          <div className="flex min-h-0 flex-1 flex-col bg-linear-to-b from-[#dadff4] from-5% via-[#c6e4ef] via-45% to-[#ade9ec]">
            <DocumentTabs />
            <div className="flex min-h-0 flex-1">
              <PropertyPanel />
              <Viewport />
            </div>
          </div>
          <BottomTabs />
        </div>
        <TaskPane />
      </main>
      <StatusBar />
      <Taskbar />

      {/* video caption and key display float over everything */}
      <svg width="540" height="190" className="pointer-events-none absolute bottom-8 left-[590px] z-20 drop-shadow-[17px_17px_2px_rgba(120,110,90,0.4)]">
        <text x="15" y="146" fontSize="130" fill="#67f0ee" stroke="#3a3a3a" strokeOpacity=".54" strokeWidth="15" strokeLinejoin="round" className="font-['Noto_Sans_CJK_SC',sans-serif] [paint-order:stroke_fill]">H啊咿呀</text>
      </svg>
      <kbd className="pointer-events-none absolute right-0 bottom-[136px] z-20 h-[60px] w-[60px] overflow-hidden rounded-l-lg border-4 border-r-0 border-[#90e890]/80 bg-[#808080]/40 pl-1 font-['Liberation_Sans',sans-serif] text-[40px] leading-[52px] font-bold whitespace-nowrap text-white/50 shadow-[0_0_6px_#80f080]">
        &lt;E
      </kbd>
    </div>
  )
}
